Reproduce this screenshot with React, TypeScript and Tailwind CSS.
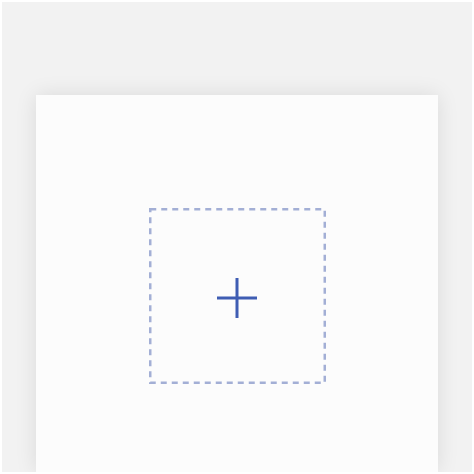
import React from "react";

export default function App() {
  return (
    <div className="w-[474px] h-[474px] bg-white p-[2px] overflow-hidden">
      <div className="w-full h-full bg-[#f2f2f2] pt-[93px] px-[34px] overflow-hidden">
        <div className="h-full bg-[#fcfcfc] shadow-[0_0_20px_rgba(0,0,0,0.1)] flex justify-center pt-[113px]">
          <div className="relative w-[177px] h-[176px] flex items-center justify-center pt-[4px]">
            <svg className="absolute inset-0" width="177" height="176" viewBox="0 0 177 176">
              <rect x="1.25" y="1.25" width="174.5" height="173.5" fill="none" stroke="#a3afd5" strokeWidth="2.5" strokeDasharray="6 5" />
            </svg>
            <svg width="42" height="42" viewBox="0 0 42 42">
              <path d="M21 1v40M1 21h40" stroke="#3f5db3" strokeWidth="3" fill="none" />
            </svg>
          </div>
        </div>
      </div>
    </div>
  );
}
